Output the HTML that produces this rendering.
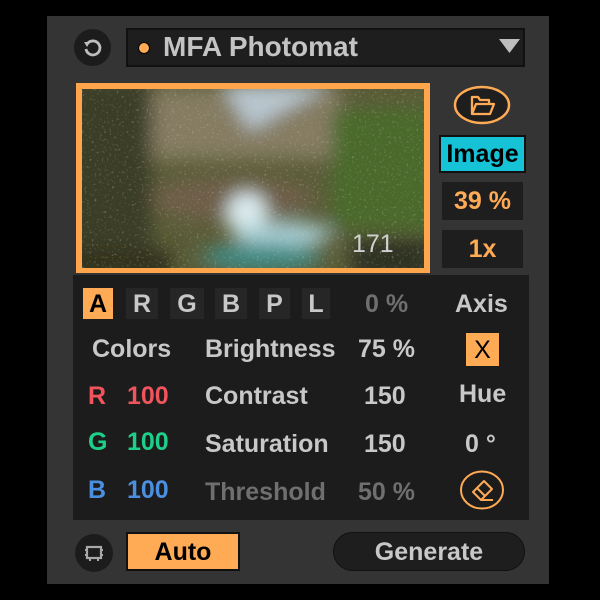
<!DOCTYPE html>
<html><head><style>
*{margin:0;padding:0;box-sizing:border-box}
body{width:600px;height:600px;background:#000;position:relative;overflow:hidden;font-family:"Liberation Sans",sans-serif}
.a{position:absolute}
.t{position:absolute;font-size:25px;line-height:30px;white-space:nowrap;color:#c8c8c8;font-weight:bold}
.c{text-align:center}
</style></head><body>
<div class="a" style="left:47px;top:16px;width:502px;height:568px;background:#343434"></div>
<!-- reset -->
<div class="a" style="left:74px;top:29px;width:37px;height:37px;border-radius:50%;background:#1c1c1c"></div>
<svg class="a" style="left:80px;top:35px" width="25" height="25" viewBox="0 0 25 25"><path d="M7.5 8.5 A7 7 0 1 1 6 14" fill="none" stroke="#bdbdbd" stroke-width="2.8"/><path d="M4 7 L10 7 L7 12 Z" fill="#bdbdbd"/></svg>
<!-- dropdown -->
<div class="a" style="left:126px;top:28px;width:399px;height:39px;background:#1e1e1e;border:2px solid #111"></div>
<div class="a" style="left:138px;top:42px;width:12px;height:12px;border-radius:50%;background:#ffaa55;border:1.5px solid #000"></div>
<div class="t" style="left:163px;top:32px;font-size:28px;color:#c4c4c4">MFA Photomat</div>
<svg class="a" style="left:499px;top:39px" width="21" height="15"><path d="M0 0H21L10.5 14Z" fill="#bdbdbd"/></svg>
<!-- image -->
<div class="a" style="left:76px;top:83px;width:354px;height:190px;background:#ffa64d"></div>
<svg class="a" style="left:82px;top:89px" width="342" height="179" viewBox="0 0 342 179">
<defs><filter id="b" x="-20%" y="-20%" width="140%" height="140%"><feGaussianBlur stdDeviation="9"/></filter>
<filter id="n"><feTurbulence type="fractalNoise" baseFrequency="0.4" numOctaves="2" seed="3"/><feColorMatrix values="0 0 0 0 0.75 0 0 0 0 0.7 0 0 0 0 0.6 0 0 0 2.5 -1.5"/></filter></defs>
<rect width="342" height="179" fill="#5a5c38"/>
<g filter="url(#b)">
<rect x="60" y="0" width="200" height="70" fill="#857c62"/>
<rect x="-20" y="-10" width="90" height="200" fill="#3a3e26"/>
<rect x="250" y="20" width="100" height="120" fill="#4a6a2a"/>
<path d="M140 -5H250L168 42Z" fill="#b8c6cf"/>
<ellipse cx="150" cy="110" rx="80" ry="22" fill="#6e5e48"/>
<ellipse cx="165" cy="125" rx="20" ry="22" fill="#dcecf0"/>
<ellipse cx="200" cy="145" rx="50" ry="12" fill="#a9cfd6"/>
<ellipse cx="180" cy="168" rx="60" ry="14" fill="#3f8a84"/>
<rect x="-10" y="160" width="100" height="30" fill="#32301f"/>
<rect x="270" y="150" width="80" height="40" fill="#2e3020"/>
</g>
<rect width="342" height="179" filter="url(#n)" opacity=".45"/>
</svg>
<div class="t" style="left:352px;top:229px;font-size:25px;color:#d0d0d0;font-weight:normal">171</div>
<!-- right col -->
<svg class="a" style="left:452px;top:84px" width="60" height="42"><ellipse cx="30" cy="21" rx="27" ry="18" fill="#1e1e1e" stroke="#ffaa55" stroke-width="2.5"/><path d="M20 30V13h6l2 3h9v4M20 30l4-10h18l-4 10Z" fill="none" stroke="#ffaa55" stroke-width="2.3" stroke-linejoin="round"/></svg>
<div class="a" style="left:439px;top:135px;width:87px;height:38px;background:#16c2d6;border:2px solid #111"></div>
<div class="t c" style="left:439px;top:139px;width:87px;color:#000;font-size:25px">Image</div>
<div class="a" style="left:442px;top:182px;width:81px;height:38px;background:#1e1e1e"></div>
<div class="t c" style="left:442px;top:186px;width:81px;color:#ffaa55">39 %</div>
<div class="a" style="left:442px;top:230px;width:81px;height:38px;background:#1e1e1e"></div>
<div class="t c" style="left:442px;top:234px;width:81px;color:#ffaa55">1x</div>
<!-- lower panel -->
<div class="a" style="left:73px;top:275px;width:456px;height:245px;background:#1c1c1c"></div>
<div class="a" style="left:83px;top:288px;width:30px;height:31px;background:#ffaa55"></div>
<div class="t c" style="left:83px;top:289px;width:30px;color:#000">A</div>
<div class="a" style="left:126px;top:288px;width:32px;height:31px;background:#262626"></div>
<div class="t c" style="left:126px;top:289px;width:32px">R</div>
<div class="a" style="left:170px;top:288px;width:34px;height:31px;background:#262626"></div>
<div class="t c" style="left:170px;top:289px;width:34px">G</div>
<div class="a" style="left:215px;top:288px;width:32px;height:31px;background:#262626"></div>
<div class="t c" style="left:215px;top:289px;width:32px">B</div>
<div class="a" style="left:259px;top:288px;width:31px;height:31px;background:#262626"></div>
<div class="t c" style="left:259px;top:289px;width:31px">P</div>
<div class="a" style="left:302px;top:288px;width:28px;height:31px;background:#262626"></div>
<div class="t c" style="left:302px;top:289px;width:28px">L</div>
<div class="t" style="left:365px;top:289px;color:#6f6f6f">0 %</div>
<div class="t" style="left:455px;top:289px">Axis</div>

<div class="t" style="left:92px;top:334px">Colors</div>
<div class="t" style="left:205px;top:334px">Brightness</div>
<div class="t" style="left:358px;top:334px">75 %</div>
<div class="a" style="left:466px;top:333px;width:33px;height:33px;background:#ffaa55"></div>
<div class="t c" style="left:466px;top:335px;width:33px;color:#000;font-weight:normal">X</div>

<div class="t" style="left:88px;top:381px;color:#f0545c">R</div>
<div class="t" style="left:127px;top:381px;color:#f0545c">100</div>
<div class="t" style="left:205px;top:381px">Contrast</div>
<div class="t" style="left:364px;top:381px">150</div>
<div class="t" style="left:459px;top:379px">Hue</div>

<div class="t" style="left:88px;top:427px;color:#1ecf8a">G</div>
<div class="t" style="left:127px;top:427px;color:#1ecf8a">100</div>
<div class="t" style="left:205px;top:429px">Saturation</div>
<div class="t" style="left:364px;top:429px">150</div>
<div class="t" style="left:465px;top:429px">0 °</div>

<div class="t" style="left:88px;top:475px;color:#4a8fe0">B</div>
<div class="t" style="left:127px;top:475px;color:#4a8fe0">100</div>
<div class="t" style="left:205px;top:477px;color:#6f6f6f">Threshold</div>
<div class="t" style="left:358px;top:477px;color:#6f6f6f">50 %</div>
<svg class="a" style="left:459px;top:469px" width="46" height="42"><ellipse cx="23" cy="21" rx="21" ry="18.5" fill="none" stroke="#ffaa55" stroke-width="2"/><path d="M14 23L25 12l8 8-11 11Z M18 19l8 8 M22 31h12" fill="none" stroke="#ffaa55" stroke-width="2" stroke-linejoin="round"/></svg>
<!-- bottom -->
<div class="a" style="left:75px;top:534px;width:38px;height:38px;border-radius:50%;background:#1c1c1c"></div>
<svg class="a" style="left:84px;top:543px" width="20" height="20"><rect x="3" y="4" width="14" height="11" fill="none" stroke="#a8a8a8" stroke-width="2.2"/><path d="M1 7h2M17 7h2M1 12h2M17 12h2M6 15v3M14 15v3" stroke="#a8a8a8" stroke-width="2"/></svg>
<div class="a" style="left:126px;top:532px;width:114px;height:39px;background:#ffaa55;border:2px solid #111"></div>
<div class="t c" style="left:126px;top:537px;width:114px;color:#000">Auto</div>
<div class="a" style="left:333px;top:532px;width:192px;height:39px;border-radius:20px;background:#1e1e1e;border:1.5px solid #111"></div>
<div class="t c" style="left:333px;top:537px;width:192px">Generate</div>
</body></html>
